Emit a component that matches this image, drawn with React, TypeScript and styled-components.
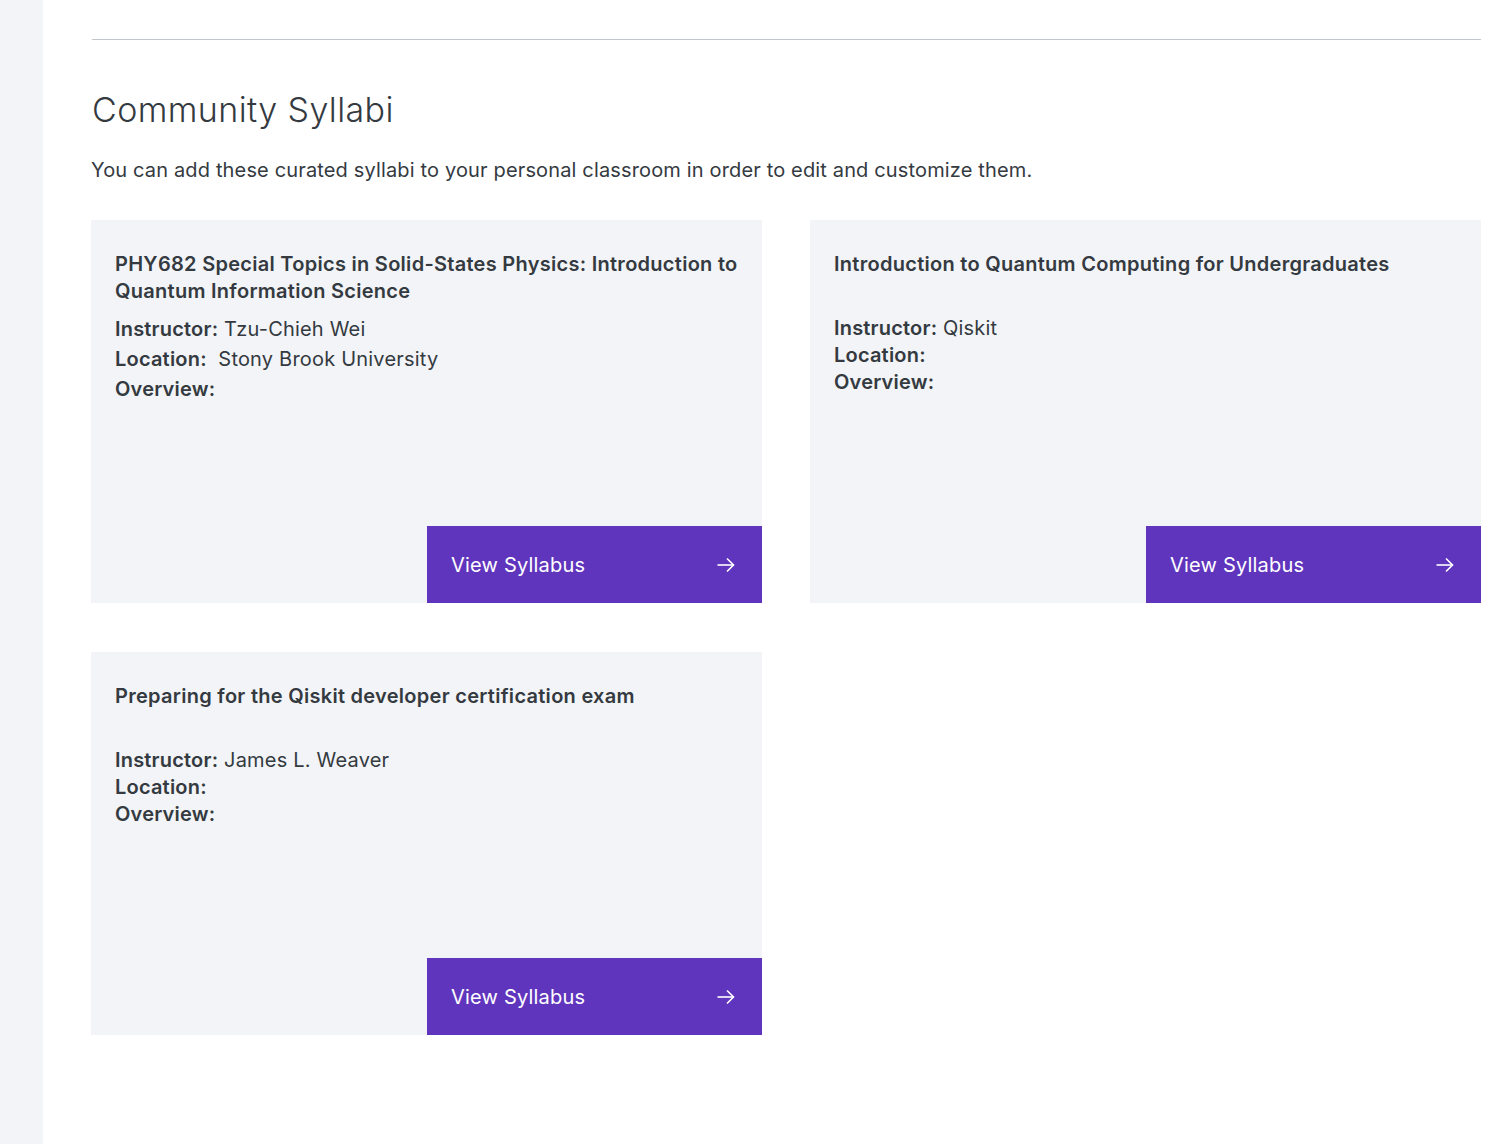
import styled, { createGlobalStyle } from 'styled-components'

type Syllabus = {
  id: number
  title: string
  instructor: string
  location: string
  loose?: boolean
}

const syllabi: Syllabus[] = [
  {
    id: 1,
    title: 'PHY682 Special Topics in Solid-States Physics: Introduction to Quantum Information Science',
    instructor: 'Tzu-Chieh Wei',
    location: '\u00a0 Stony Brook University',
    loose: true,
  },
  {
    id: 2,
    title: 'Introduction to Quantum Computing for Undergraduates',
    instructor: 'Qiskit',
    location: '',
  },
  {
    id: 3,
    title: 'Preparing for the Qiskit developer certification exam',
    instructor: 'James L. Weaver',
    location: '',
  },
]

const ArrowRight = () => (
  <svg width="20" height="20" viewBox="0 0 20 20" fill="none" stroke="currentColor" strokeWidth="1.6">
    <path d="M1.5 10h16" />
    <path d="M11 3.5l6.5 6.5-6.5 6.5" />
  </svg>
)

const App = () => {
  return (
    <>
      <GlobalStyle />
      <Layout>
        <SideRail />
        <Main>
          <Divider />
          <Heading>Community Syllabi</Heading>
          <Intro>
            You can add these curated syllabi to your personal classroom in order to edit and customize them.
          </Intro>

          <CardGrid>
            {syllabi.map((s) => (
              <Card key={s.id}>
                <CardTitle>{s.title}</CardTitle>
                <Meta $loose={s.loose}>
                  <div>
                    <Label>Instructor:</Label> {s.instructor}
                  </div>
                  <div>
                    <Label>Location:</Label>
                    {s.location}
                  </div>
                  <div>
                    <Label>Overview:</Label>
                  </div>
                </Meta>
                <ViewButton href="#">
                  <span>View Syllabus</span>
                  <ArrowRight />
                </ViewButton>
              </Card>
            ))}
          </CardGrid>
        </Main>
      </Layout>
    </>
  )
}

const GlobalStyle = createGlobalStyle`
  html, body {
    margin: 0;
    padding: 0;
    background: #ffffff;
  }
  body {
    font-family: Inter, "Noto Sans", sans-serif;
    color: #343a3f;
  }
`

const Layout = styled.div`
  display: flex;
  min-height: 1144px;
`

const SideRail = styled.div`
  width: 43px;
  flex-shrink: 0;
  background: #f2f4f8;
`

const Main = styled.main`
  flex: 1;
  padding: 39px 27px 0 48px;
`

const Divider = styled.hr`
  margin: 0 0 0 1px;
  border: none;
  border-top: 1px solid #c1c7cd;
`

const Heading = styled.h1`
  margin: 48px 0 0 1px;
  font-size: 34px;
  font-weight: 300;
  line-height: 44px;
  letter-spacing: 0.4px;
  color: #343a3f;
`

const Intro = styled.p`
  margin: 25px 0 0;
  font-size: 20px;
  line-height: 26px;
  letter-spacing: 0.15px;
  color: #343a3f;
`

const CardGrid = styled.div`
  display: grid;
  grid-template-columns: repeat(2, 671px);
  column-gap: 48px;
  row-gap: 49px;
  margin-top: 37px;
`

const Card = styled.div`
  display: flex;
  flex-direction: column;
  height: 383px;
  box-sizing: border-box;
  padding: 31px 0 0 24px;
  background: #f2f4f8;
  letter-spacing: 0.2px;
`

const CardTitle = styled.h3`
  margin: 0;
  min-height: 54px;
  padding-right: 18px;
  font-size: 20px;
  font-weight: 600;
  line-height: 27px;
  letter-spacing: 0.28px;
  color: #343a3f;
`

const Meta = styled.div<{ $loose?: boolean }>`
  margin-top: ${(p) => (p.$loose ? '9px' : '10px')};
  font-size: 20px;
  line-height: ${(p) => (p.$loose ? '30px' : '27px')};
  color: #343a3f;
`

const Label = styled.strong`
  font-weight: 600;
`

const ViewButton = styled.a`
  margin-top: auto;
  align-self: flex-end;
  display: flex;
  align-items: center;
  justify-content: space-between;
  width: 335px;
  height: 77px;
  box-sizing: border-box;
  padding: 0 26px 0 24px;
  background: #6035bd;
  color: #ffffff;
  font-size: 20px;
  text-decoration: none;

  &:hover {
    background: #5129a8;
  }
`

export default App
